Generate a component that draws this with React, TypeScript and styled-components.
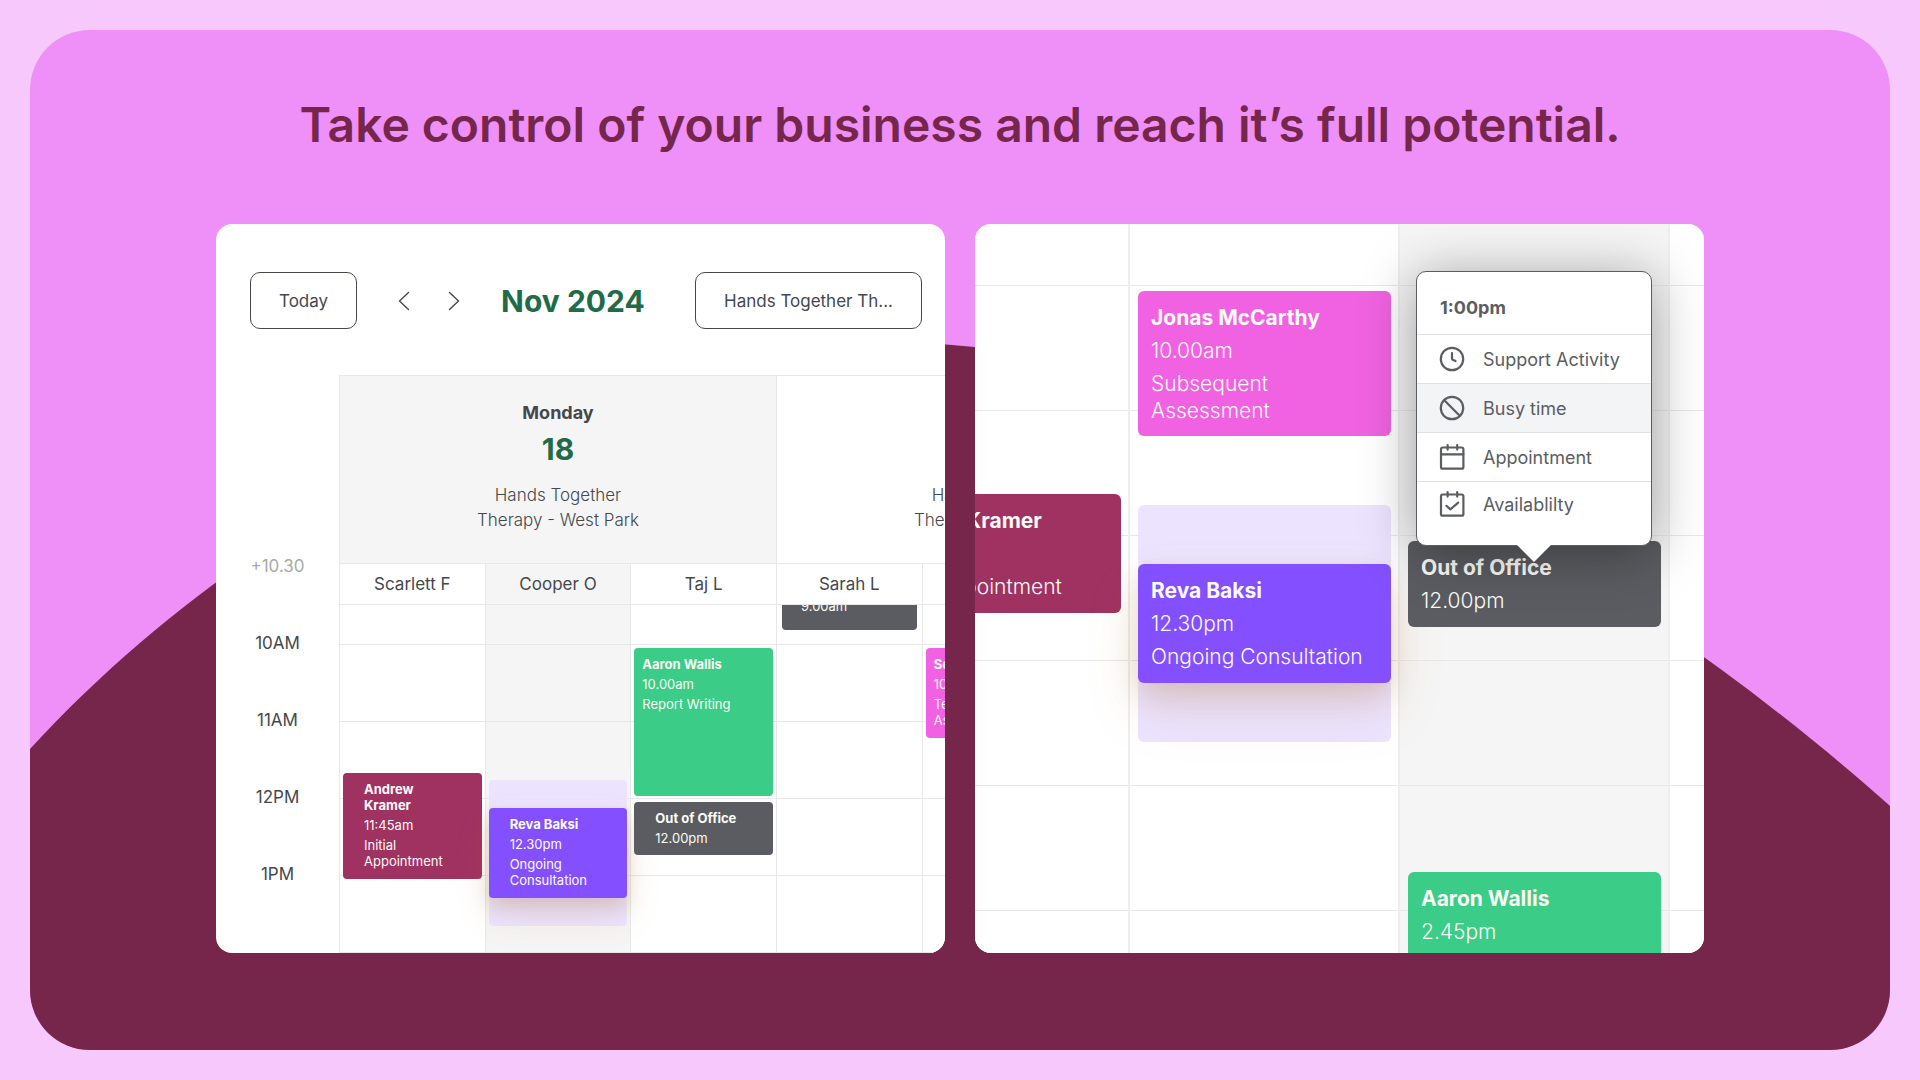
import React from "react";
import styled, { createGlobalStyle, css } from "styled-components";

const color = {
  page: "#f6c8fb",
  hero: "#ef8ff8",
  hill: "#76264b",
  ink: "#44484d",
  soft: "#5a5d62",
  muted: "#aaaaa3",
  green: "#226b48",
  line: "#e8e8e8",
  shade: "#f5f5f5",
  cream: "#fbfbf5",
};

const tones = {
  maroon: "#a03262",
  violet: "#8450ff",
  green: "#3bcc87",
  pink: "#f062e1",
  grey: "#5a5c61",
};

type Tone = keyof typeof tones;

const GlobalStyle = createGlobalStyle`
  *, *::before, *::after { box-sizing: border-box; }
  body {
    margin: 0;
    background: ${color.page};
    color: ${color.ink};
    font-family: Inter, "Liberation Sans", sans-serif;
    font-weight: 400;
  }
  h1, h2, h3, p, ul { margin: 0; padding: 0; }
  button { font: inherit; color: inherit; background: none; border: 0; padding: 0; cursor: pointer; }
`;

const Page = styled.main`
  min-height: 100vh;
  padding: 30px;
  display: flex;
`;

const Hero = styled.section`
  position: relative;
  isolation: isolate;
  flex: 1;
  min-width: 0;
  padding: 65px 10% 97px;
  border-radius: 60px;
  overflow: hidden;
  background: ${color.hero};
  display: flex;
  flex-direction: column;
  gap: 69px;
`;

const Hill = styled.svg`
  position: absolute;
  inset: 0;
  z-index: -1;
  width: 100%;
  height: 100%;
`;

const Title = styled.h1`
  font-size: 48px;
  line-height: 60px;
  font-weight: 600;
  text-align: center;
  white-space: nowrap;
  align-self: center;
  color: ${color.hill};
`;

const Panels = styled.div`
  display: grid;
  grid-template-columns: minmax(0, 1fr) minmax(0, 1fr);
  gap: 30px;
`;

const Panel = styled.article`
  aspect-ratio: 1;
  min-height: 0;
  overflow: hidden;
  border-radius: 16px;
  background: #fff;
  display: flex;
  flex-direction: column;
`;

const Toolbar = styled.header`
  display: flex;
  align-items: center;
  gap: 35px;
  padding: 48px 23px 46px 34px;
`;

const OutlineButton = styled.button`
  height: 57px;
  padding: 0 28px;
  border: 1px solid ${color.ink};
  border-radius: 10px;
  font-size: 17px;
  white-space: nowrap;

  &:last-child { margin-left: auto; }
`;

const Pager = styled.div`
  display: flex;
  gap: 26px;
`;

const PagerButton = styled.button`
  width: 24px;
  height: 24px;
  display: grid;
  place-items: center;
`;

const Month = styled.h2`
  font-size: 30px;
  line-height: 40px;
  font-weight: 700;
  color: ${color.green};
`;

const Schedule = styled.div`
  flex: 1;
  min-height: 0;
  display: grid;
  grid-template-columns: 123px 437px 437px;
`;

const Hours = styled.div`
  padding-top: 153px;
  font-size: 17px;
  text-align: center;
`;

const Hour = styled.div<{ $muted?: boolean }>`
  line-height: 77px;
  color: ${(p) => (p.$muted ? color.muted : "inherit")};
`;

const Day = styled.section`
  display: flex;
  flex-direction: column;
  min-height: 0;
  border-top: 1px solid ${color.line};
`;

const DayHead = styled.header<{ $today?: boolean }>`
  height: 187px;
  padding-bottom: 30px;
  display: flex;
  flex-direction: column;
  justify-content: flex-end;
  border-left: 1px solid ${color.line};
  background: ${(p) => (p.$today ? color.shade : "#fff")};
  text-align: center;
`;

const DayName = styled.h3`
  font-size: 18px;
  line-height: 26px;
  font-weight: 700;
`;

const DayNumber = styled.p`
  font-size: 30px;
  line-height: 46px;
  font-weight: 700;
  color: ${color.green};
`;

const Place = styled.p`
  width: 180px;
  margin: 11px auto 0;
  font-size: 17px;
  line-height: 25px;
  font-weight: 300;
`;

const Thirds = styled.div`
  display: grid;
  grid-template-columns: repeat(3, minmax(0, 1fr));
`;

const Names = styled(Thirds)`
  height: 42px;
  border-top: 1px solid ${color.line};
  border-bottom: 1px solid ${color.line};
  font-size: 17px;
  line-height: 40px;
  text-align: center;
`;

const Name = styled.div<{ $shade?: boolean }>`
  border-left: 1px solid ${color.line};
  background: ${(p) => (p.$shade ? color.shade : "transparent")};
`;

const Lanes = styled(Thirds)`
  flex: 1;
  min-height: 0;
  overflow: hidden;
`;

const hourLines = (start: number, step: number) => css`
  background-image: linear-gradient(${color.line} 1px, transparent 1px);
  background-size: 100% ${step}px;
  background-position: 0 ${start}px;
`;

const Lane = styled.div<{ $shade?: boolean; $inset?: string }>`
  display: flex;
  flex-direction: column;
  min-width: 0;
  min-height: 0;
  padding: 0 ${(p) => p.$inset ?? "3px"};
  border-left: 1px solid ${color.line};
  background-color: ${(p) => (p.$shade ? color.shade : "#fff")};
  ${hourLines(39, 77)}
`;

const WideLanes = styled.div`
  flex: 1;
  min-height: 0;
  margin-left: -117px;
  display: grid;
  grid-template-columns: repeat(4, 270px);
`;

const WideLane = styled.div<{ $shade?: boolean }>`
  display: flex;
  flex-direction: column;
  min-height: 0;
  padding: 0 7px 0 8px;
  border-left: 2px solid #eeeeee;
  background-color: ${(p) => (p.$shade ? color.shade : "#fff")};
  ${hourLines(61, 125)}
`;

const Booking = styled.div<{ $tone: Tone; $offset: number; $height: number; $large?: boolean; $indent?: number }>`
  position: relative;
  flex: none;
  margin-top: ${(p) => p.$offset}px;
  height: ${(p) => p.$height}px;
  display: flex;
  flex-direction: column;
  gap: ${(p) => (p.$large ? 6 : 4)}px;
  padding: ${(p) => (p.$large ? 13 : 8)}px ${(p) => p.$indent ?? (p.$large ? 13 : 8)}px 0;
  border-radius: ${(p) => (p.$large ? 6 : 4)}px;
  background: ${(p) => tones[p.$tone]};
  color: ${color.cream};
  font-size: ${(p) => (p.$large ? 21 : 13)}px;
  line-height: ${(p) => (p.$large ? 27 : 16)}px;
  font-weight: ${(p) => (p.$large ? 300 : 400)};
`;

const Client = styled.strong`
  font-weight: 700;
`;

const Ghost = styled.div<{ $offset: number; $pad: number }>`
  flex: none;
  margin-top: ${(p) => p.$offset}px;
  padding: ${(p) => p.$pad}px 0;
  border-radius: ${(p) => (p.$pad > 40 ? 6 : 4)}px;
  background: #ece4ff;

  & > ${Booking} {
    box-shadow: 0 ${(p) => (p.$pad > 40 ? "28px 56px" : "18px 36px")} rgba(178, 120, 40, 0.14),
      0 ${(p) => (p.$pad > 40 ? "12px 28px" : "8px 18px")} rgba(150, 90, 40, 0.2);
  }
`;

const Popover = styled.div`
  position: absolute;
  left: 8px;
  bottom: calc(100% - 5px);
  width: 236px;
  border: 1px solid ${color.soft};
  border-radius: 10px;
  background: #fff;
  box-shadow: 0 6px 54px rgba(0, 0, 0, 0.36);
  color: ${color.soft};
  font-size: 18px;
  font-weight: 400;

  &::after {
    content: "";
    position: absolute;
    top: 100%;
    left: 100px;
    border: 17px solid transparent;
    border-top-color: #fff;
    border-bottom: 0;
  }
`;

const PopoverTime = styled.h3`
  padding: 18px 23px 8px;
  font-size: 18px;
  line-height: 36px;
  font-weight: 700;
`;

const MenuList = styled.ul`
  list-style: none;
  padding-bottom: 19px;
`;

const MenuButton = styled.button<{ $active?: boolean }>`
  width: 100%;
  height: 49px;
  padding-left: 22px;
  border-top: 1px solid #dfe1e3;
  display: flex;
  align-items: center;
  gap: 18px;
  background: ${(p) => (p.$active ? "#f3f4f6" : "transparent")};

  li:last-child > & { height: 45px; }
`;

const Icon = styled.svg`
  width: 26px;
  height: 26px;
  fill: none;
  stroke: currentColor;
  stroke-width: 2.2;
  stroke-linecap: round;
  stroke-linejoin: round;
`;

const ClockIcon = () => (
  <Icon viewBox="0 0 26 26" aria-hidden="true">
    <circle cx="13" cy="13" r="11.2" />
    <path d="M13 7v5.4c0 .6.3 1 .8 1.3l2.7 1.4" />
  </Icon>
);

const BanIcon = () => (
  <Icon viewBox="0 0 26 26" aria-hidden="true">
    <circle cx="13" cy="13" r="11.2" />
    <path d="M5.3 5.3l15.4 15.4" />
  </Icon>
);

const CalendarIcon = ({ checked }: { checked?: boolean }) => (
  <Icon viewBox="0 0 26 26" aria-hidden="true">
    <rect x="2" y="3.5" width="22.4" height="21.2" rx="1.8" />
    <path d="M8.6 1.1v4.5M18.2 1.1v4.5" />
    {checked ? <path d="M7.4 14.8l4 3.6 7.8-6.8" /> : <path d="M2 10.3h22.4" />}
  </Icon>
);

const Chevron = ({ d }: { d: string }) => (
  <svg width="24" height="24" viewBox="0 0 24 24" fill="none" stroke="currentColor" strokeWidth="1.4" aria-hidden="true">
    <path d={d} strokeLinecap="round" strokeLinejoin="round" />
  </svg>
);

type EventProps = {
  tone: Tone;
  offset?: number;
  height: number;
  large?: boolean;
  indent?: number;
  client?: string;
  time: string;
  note?: React.ReactNode;
  children?: React.ReactNode;
};

const Event = ({ tone, offset = 0, height, large, indent, client, time, note, children }: EventProps) => (
  <Booking $tone={tone} $offset={offset} $height={height} $large={large} $indent={indent}>
    {client && <Client>{client}</Client>}
    <span>{time}</span>
    {note && <span>{note}</span>}
    {children}
  </Booking>
);

const menu = [
  { label: "Support Activity", icon: <ClockIcon /> },
  { label: "Busy time", icon: <BanIcon />, active: true },
  { label: "Appointment", icon: <CalendarIcon /> },
  { label: "Availablilty", icon: <CalendarIcon checked /> },
];

const SlotMenu = () => (
  <Popover>
    <PopoverTime>1:00pm</PopoverTime>
    <MenuList>
      {menu.map((item) => (
        <li key={item.label}>
          <MenuButton type="button" $active={item.active}>
            {item.icon}
            {item.label}
          </MenuButton>
        </li>
      ))}
    </MenuList>
  </Popover>
);

const WeekPanel = () => (
  <Panel>
    <Toolbar>
      <OutlineButton type="button">Today</OutlineButton>
      <Pager>
        <PagerButton type="button" aria-label="Previous week">
          <Chevron d="M16.5 3.5l-9 8.5 9 8.5" />
        </PagerButton>
        <PagerButton type="button" aria-label="Next week">
          <Chevron d="M7.5 3.5l9 8.5-9 8.5" />
        </PagerButton>
      </Pager>
      <Month>Nov 2024</Month>
      <OutlineButton type="button">Hands Together Th...</OutlineButton>
    </Toolbar>
    <Schedule>
      <Hours>
        <Hour $muted>+10.30</Hour>
        <Hour>10AM</Hour>
        <Hour>11AM</Hour>
        <Hour>12PM</Hour>
        <Hour>1PM</Hour>
      </Hours>
      <Day>
        <DayHead $today>
          <DayName>Monday</DayName>
          <DayNumber>18</DayNumber>
          <Place>Hands Together Therapy - West Park</Place>
        </DayHead>
        <Names>
          <Name>Scarlett F</Name>
          <Name $shade>Cooper O</Name>
          <Name>Taj L</Name>
        </Names>
        <Lanes>
          <Lane>
            <Event tone="maroon" offset={168} height={106} indent={21} client="Andrew Kramer" time="11:45am" note="Initial Appointment" />
          </Lane>
          <Lane $shade>
            <Ghost $offset={175} $pad={28}>
              <Event tone="violet" height={90} indent={21} client="Reva Baksi" time="12.30pm" note="Ongoing Consultation" />
            </Ghost>
          </Lane>
          <Lane>
            <Event tone="green" offset={43} height={148} client="Aaron Wallis" time="10.00am" note="Report Writing" />
            <Event tone="grey" offset={6} height={53} indent={21} client="Out of Office" time="12.00pm" />
          </Lane>
        </Lanes>
      </Day>
      <Day>
        <DayHead>
          <Place>Hands Together Therapy - West Park</Place>
        </DayHead>
        <Names>
          <Name>Sarah L</Name>
          <Name />
          <Name />
        </Names>
        <Lanes>
          <Lane $inset="5px">
            <Event tone="grey" offset={-15} height={40} indent={19} time="9.00am" />
          </Lane>
          <Lane>
            <Event tone="pink" offset={43} height={90} client="Scott Hale" time="10.00am" note={<>Telehealth<br />Assessment</>} />
          </Lane>
          <Lane />
        </Lanes>
      </Day>
    </Schedule>
  </Panel>
);

const DetailPanel = () => (
  <Panel>
    <WideLanes>
      <WideLane>
        <Event large tone="maroon" offset={270} height={119} client="Andrew Kramer" time="11:45am" note="Initial Appointment" />
      </WideLane>
      <WideLane>
        <Event large tone="pink" offset={67} height={145} client="Jonas McCarthy" time="10.00am" note={<>Subsequent<br />Assessment</>} />
        <Ghost $offset={69} $pad={59}>
          <Event large tone="violet" height={119} client="Reva Baksi" time="12.30pm" note="Ongoing Consultation" />
        </Ghost>
      </WideLane>
      <WideLane $shade>
        <Event large tone="grey" offset={317} height={86} client="Out of Office" time="12.00pm">
          <SlotMenu />
        </Event>
        <Event large tone="green" offset={245} height={119} client="Aaron Wallis" time="2.45pm" />
      </WideLane>
      <WideLane />
    </WideLanes>
  </Panel>
);

export default function App() {
  return (
    <>
      <GlobalStyle />
      <Page>
        <Hero>
          <Hill viewBox="30 30 1860 1020" preserveAspectRatio="none" aria-hidden="true">
            <path
              d="M30 749C296 460 650 342 880 342C1250 342 1640 583 1890 806V1050H30Z"
              fill={color.hill}
            />
          </Hill>
          <Title>Take control of your business and reach it’s full potential.</Title>
          <Panels>
            <WeekPanel />
            <DetailPanel />
          </Panels>
        </Hero>
      </Page>
    </>
  );
}
